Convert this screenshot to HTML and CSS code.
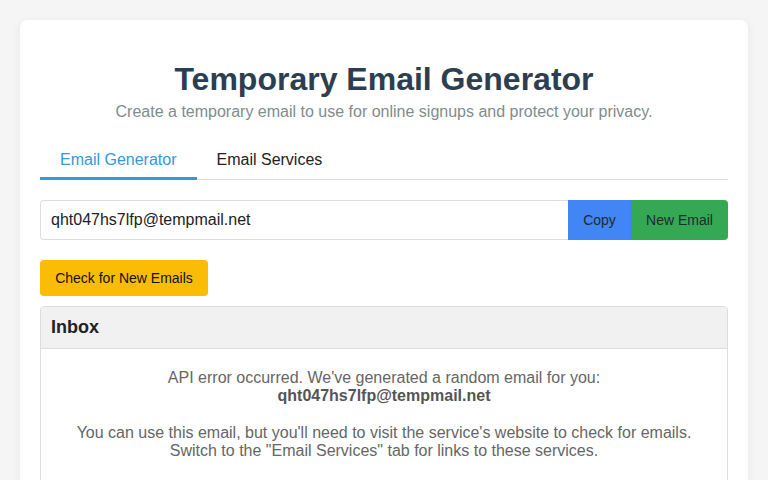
FILE: index.html
```html
<!DOCTYPE html>
<html>
<head>
<meta charset="utf-8">
<link rel="stylesheet" href="styles.css">
</head>
<body>
<div class="card">
  <h1 class="title">Temporary Email Generator</h1>
  <p class="subtitle">Create a temporary email to use for online signups and protect your privacy.</p>
  <div class="tabs">
    <div class="tab active">Email Generator</div>
    <div class="tab">Email Services</div>
  </div>
  <div class="email-row">
    <div class="email-input">qht047hs7lfp@tempmail.net</div>
    <button class="btn btn-copy">Copy</button>
    <button class="btn btn-new">New Email</button>
  </div>
  <button class="btn btn-check">Check for New Emails</button>
  <div class="inbox">
    <div class="inbox-header">Inbox</div>
    <div class="inbox-body">
      <p class="msg">API error occurred. We've generated a random email for you:<br><strong>qht047hs7lfp@tempmail.net</strong></p>
      <p class="msg">You can use this email, but you'll need to visit the service's website to check for emails.<br>Switch to the "Email Services" tab for links to these services.</p>
    </div>
  </div>
</div>
</body>
</html>
```
FILE: styles.css
```css
html, body {
  margin: 0;
  padding: 0;
}
body {
  background: #f5f5f5;
  font-family: "Liberation Sans", Arial, sans-serif;
  padding: 20px 20px 0;
  height: 480px;
  box-sizing: border-box;
  overflow: hidden;
}
.card {
  background: #fff;
  border-radius: 8px;
  box-shadow: 0 2px 10px rgba(0,0,0,0.06);
  padding: 20px;
}
.title {
  font-size: 32px;
  font-weight: bold;
  color: #2c3e50;
  text-align: center;
  margin: 21px 0 6px;
  line-height: 36px;
}
.subtitle {
  font-size: 16px;
  color: #7f8c8d;
  text-align: center;
  margin: 0 0 19px;
  line-height: 18px;
}
.tabs {
  display: flex;
  border-bottom: 1px solid #ddd;
  margin-bottom: 20px;
}
.tab {
  padding: 10px 20px 8px;
  font-size: 16px;
  line-height: 19px;
  color: #222;
  border-bottom: 3px solid transparent;
  margin-bottom: -1px;
}
.tab.active {
  color: #3498db;
  border-bottom-color: #3498db;
}
.email-row {
  display: flex;
  height: 40px;
  margin-bottom: 20px;
}
.email-input {
  flex: 1;
  border: 1px solid #ddd;
  border-right: none;
  border-radius: 4px 0 0 4px;
  padding: 0 10px;
  font-size: 16px;
  line-height: 38px;
  color: #222;
}
.btn {
  font-family: "Liberation Sans", Arial, sans-serif;
  font-size: 14px;
  border: none;
  padding: 0 15px;
  color: #1f2a33;
  cursor: pointer;
}
.btn-copy {
  background: #4285f4;
  width: 63px;
}
.btn-new {
  background: #34a853;
  border-radius: 0 4px 4px 0;
  width: 97px;
}
.btn-check {
  display: block;
  background: #fbbc05;
  border-radius: 4px;
  height: 36px;
  width: 168px;
  margin-bottom: 10px;
  color: #111;
}
.inbox {
  border: 1px solid #ddd;
  border-radius: 4px;
  overflow: hidden;
}
.inbox-header {
  background: #f1f1f1;
  border-bottom: 1px solid #ddd;
  padding: 10px;
  font-size: 18px;
  font-weight: bold;
  line-height: 21px;
  color: #222;
}
.inbox-body {
  padding: 20px 20px 40px;
  text-align: center;
  color: #666;
  font-size: 16px;
  line-height: 18px;
}
.msg {
  margin: 0 0 19px;
}
.msg:last-child {
  margin-bottom: 0;
}
.msg strong {
  color: #555;
}
```
